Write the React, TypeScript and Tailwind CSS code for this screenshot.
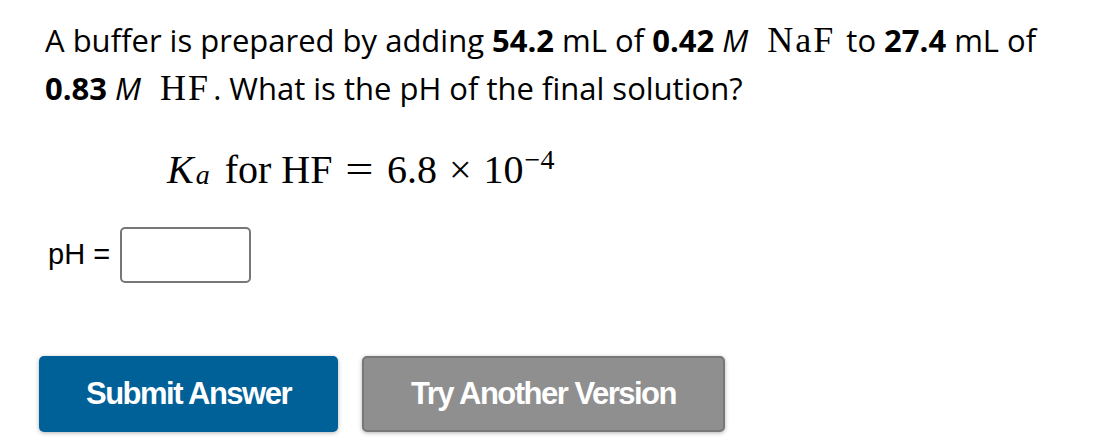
export default function App() {
  const sans = { fontFamily: '"Open Sans", sans-serif' };
  const serif = "font-['Liberation_Serif',serif] text-[36px] leading-[40px] tracking-[2px] ml-[11px] mr-[3px]";
  return (
    <div className="w-[1113px] h-[446px] bg-white overflow-hidden" style={sans}>
      <div className="pl-[45px] pt-[16px] pr-[20px]">
        <p className="text-[31px] leading-[48px] text-black">
          A buffer is prepared by adding <b>54.2</b> mL of <b>0.42</b> <i>M</i>{" "}
          <span className={serif}>NaF</span> to <b>27.4</b> mL of
          <br />
          <b>0.83</b> <i>M</i>{" "}
          <span className={serif}>HF</span>. What is the pH of the final solution?
        </p>
        <div className="pl-[122px] mt-[33px] h-[50px] flex items-center font-['Liberation_Serif',serif] text-[40px] text-black">
          <span className="italic">K</span>
          <sub className="italic text-[28px] relative top-[5px] ml-[2px]">a</sub>
          <span className="ml-[15px]">for HF</span>
          <span className="mx-[16px] scale-x-125 inline-block">=</span>
          <span>6.8</span>
          <span className="mx-[12px]">×</span>
          <span>10</span>
          <sup className="text-[28px] relative -top-[10px] ml-[1px]">−4</sup>
        </div>
        <div className="flex items-center mt-[32px] h-[56px]">
          <span className="text-[29px] text-black font-['Liberation_Sans',sans-serif] ml-[3px]">pH =</span>
          <div className="ml-[10px] w-[131px] h-[56px] border-2 border-[#777] rounded-[5px]" />
        </div>
        <div className="flex gap-[24px] mt-[73px] -ml-[6px]">
          <button className="w-[299px] h-[76px] bg-[#006098] rounded-[5px] text-white font-bold text-[31px] tracking-[-1.5px] font-['Liberation_Sans',sans-serif] shadow-[0_1px_4px_rgba(0,0,0,0.3)]">
            Submit Answer
          </button>
          <button className="w-[363px] h-[76px] bg-[#8f8f8f] border-2 border-[#777] rounded-[5px] text-white font-bold text-[31px] tracking-[-1.5px] font-['Liberation_Sans',sans-serif] shadow-[0_1px_4px_rgba(0,0,0,0.3)]">
            Try Another Version
          </button>
        </div>
      </div>
    </div>
  );
}
